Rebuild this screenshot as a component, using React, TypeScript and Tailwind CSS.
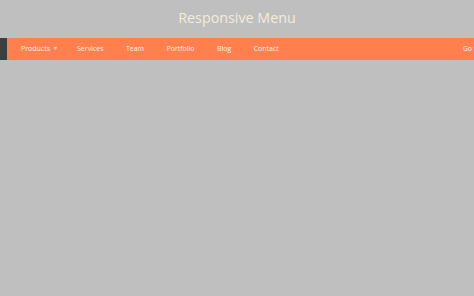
import React from "react";

const items = ["Services", "Team", "Portfolio", "Blog", "Contact"];

const App = () => {
  return (
    <div
      className="w-[474px] h-[296px] overflow-hidden bg-[#bfbfbf]"
      style={{ fontFamily: '"Open Sans", sans-serif' }}
    >
      <h1 className="pt-[8px] h-[38px] text-center text-[14.3px] leading-[20px] text-[#f2edd8]">
        Responsive Menu
      </h1>
      <nav className="flex h-[22px] w-[520px]">
        <div className="w-[7px] bg-[#3b3f40]" />
        <ul className="flex flex-1 items-center bg-[#ff7f4f] pl-[14px] text-[7px] text-[#fdf3ea]">
          <li className="flex w-[56px] items-center gap-[3px]">
            Products
            <span className="text-[5px]">▼</span>
          </li>
          {items.map((item) => (
            <li key={item} className="mr-[22.4px]">
              {item}
            </li>
          ))}
          <li className="ml-auto mr-[34px]">Go to...</li>
        </ul>
      </nav>
    </div>
  );
};

export default App;
